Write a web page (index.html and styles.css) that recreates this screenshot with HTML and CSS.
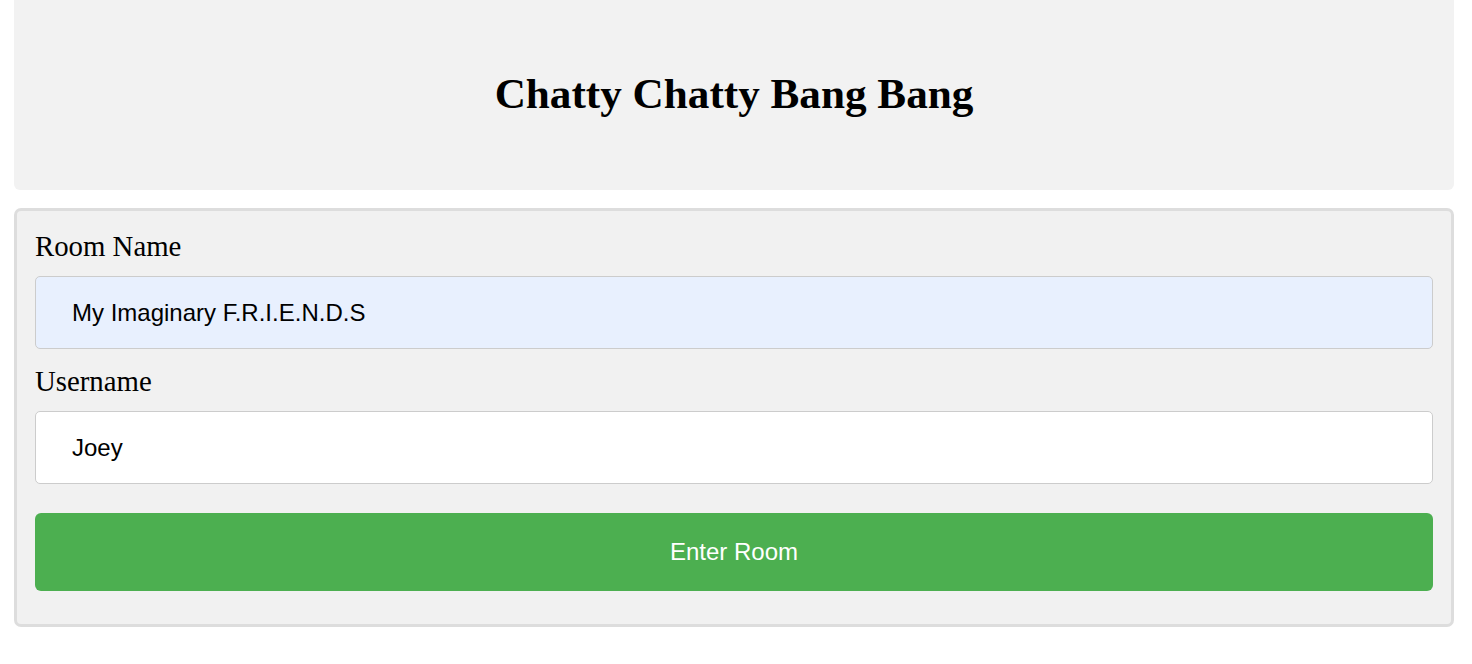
FILE: index.html
```html
<!DOCTYPE html>
<html>
<head>
<meta charset="utf-8">
<link rel="stylesheet" href="styles.css">
</head>
<body>
<div class="page">
  <header class="header">
    <h1 class="title">Chatty Chatty Bang Bang</h1>
  </header>
  <form class="join-form">
    <label class="label" for="room">Room Name</label>
    <input class="field field-autofill" id="room" type="text" value="My Imaginary F.R.I.E.N.D.S">
    <label class="label" for="user">Username</label>
    <input class="field" id="user" type="text" value="Joey">
    <button class="enter-btn" type="button">Enter Room</button>
  </form>
</div>
</body>
</html>
```

FILE: styles.css
```css
html, body {
  margin: 0;
  padding: 0;
  background: #ffffff;
}
body {
  font-family: "Liberation Serif", "Times New Roman", serif;
  color: #000;
}
.page {
  padding: 0 18px 0 14px;
}
.header {
  background: #f2f2f2;
  height: 190px;
  border-radius: 0 0 6px 6px;
  display: flex;
  align-items: center;
  justify-content: center;
}
.title {
  margin: 0;
  font-size: 43.2px;
  font-weight: bold;
  line-height: 1;
  padding-bottom: 2px;
}
.join-form {
  margin-top: 18px;
  background: #f1f1f1;
  border: 3px solid #dddddd;
  border-radius: 7px;
  padding: 20px 18px 33px 18px;
  display: flex;
  flex-direction: column;
}
.label {
  display: block;
  font-size: 28.8px;
  line-height: 30px;
  margin: 0 0 15px 0;
}
.field {
  box-sizing: border-box;
  height: 73px;
  width: 100%;
  border: 1px solid #cccccc;
  border-radius: 5px;
  background: #ffffff;
  padding: 0 0 0 36px;
  font-family: "Liberation Sans", Arial, sans-serif;
  font-size: 24px;
  color: #000;
  margin: 0 0 17px 0;
  outline: none;
}
.field-autofill {
  background: #e8f0fe;
}
.enter-btn {
  box-sizing: border-box;
  height: 78px;
  width: 100%;
  margin-top: 12px;
  border: none;
  border-radius: 6px;
  background: #4caf50;
  color: #ffffff;
  font-family: "Liberation Sans", Arial, sans-serif;
  font-size: 24px;
}
```
